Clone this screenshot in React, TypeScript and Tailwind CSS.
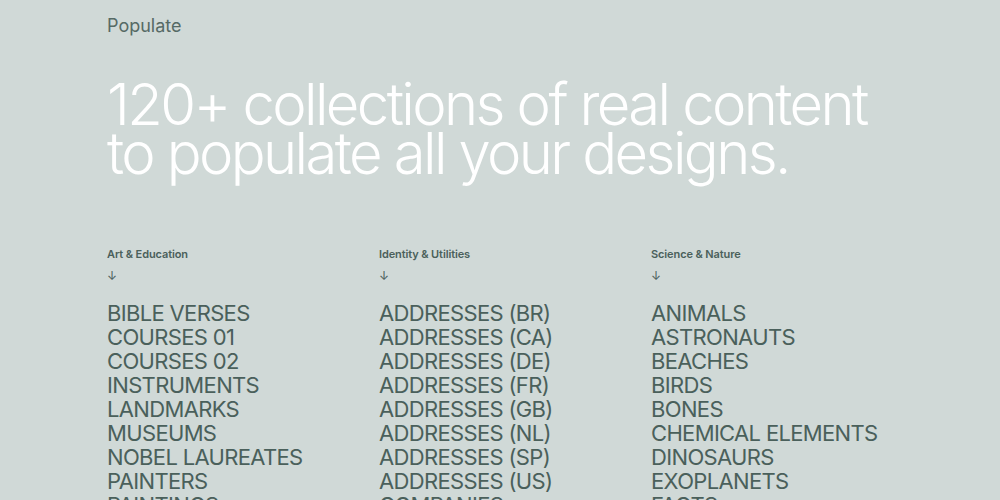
const columns: { title: string; items: string[] }[] = [
  {
    title: "Art & Education",
    items: [
      "BIBLE VERSES",
      "COURSES 01",
      "COURSES 02",
      "INSTRUMENTS",
      "LANDMARKS",
      "MUSEUMS",
      "NOBEL LAUREATES",
      "PAINTERS",
      "PAINTINGS",
    ],
  },
  {
    title: "Identity & Utilities",
    items: [
      "ADDRESSES (BR)",
      "ADDRESSES (CA)",
      "ADDRESSES (DE)",
      "ADDRESSES (FR)",
      "ADDRESSES (GB)",
      "ADDRESSES (NL)",
      "ADDRESSES (SP)",
      "ADDRESSES (US)",
      "COMPANIES",
    ],
  },
  {
    title: "Science & Nature",
    items: [
      "ANIMALS",
      "ASTRONAUTS",
      "BEACHES",
      "BIRDS",
      "BONES",
      "CHEMICAL ELEMENTS",
      "DINOSAURS",
      "EXOPLANETS",
      "FACTS",
    ],
  },
];

export default function App() {
  return (
    <div
      className="h-[500px] w-[1000px] overflow-hidden bg-[#d0d9d7] pl-[107px] text-[#4a605b]"
      style={{ fontFamily: "Inter, 'Noto Sans', sans-serif" }}
    >
      <header className="pt-[14px] text-[18px] leading-[24px] text-[#566a65]">Populate</header>
      <h1 className="mt-[42px] text-[58px] font-light leading-[49px] tracking-[-0.045em] text-white">
        120+ collections of real content
        <br />
        to populate all your designs.
      </h1>
      <div className="mt-[69px] grid grid-cols-[272px_272px_272px]">
        {columns.map((col) => (
          <section key={col.title}>
            <h2 className="text-[11px] font-semibold leading-[14px] tracking-[-0.01em]">{col.title}</h2>
            <div className="mt-[8px] text-[12px] leading-[14px]">↓</div>
            <ul className="mt-[18px]">
              {col.items.map((item) => (
                <li key={item} className="text-[22px] leading-[24px] tracking-[-0.03em]">
                  {item}
                </li>
              ))}
            </ul>
          </section>
        ))}
      </div>
    </div>
  );
}
